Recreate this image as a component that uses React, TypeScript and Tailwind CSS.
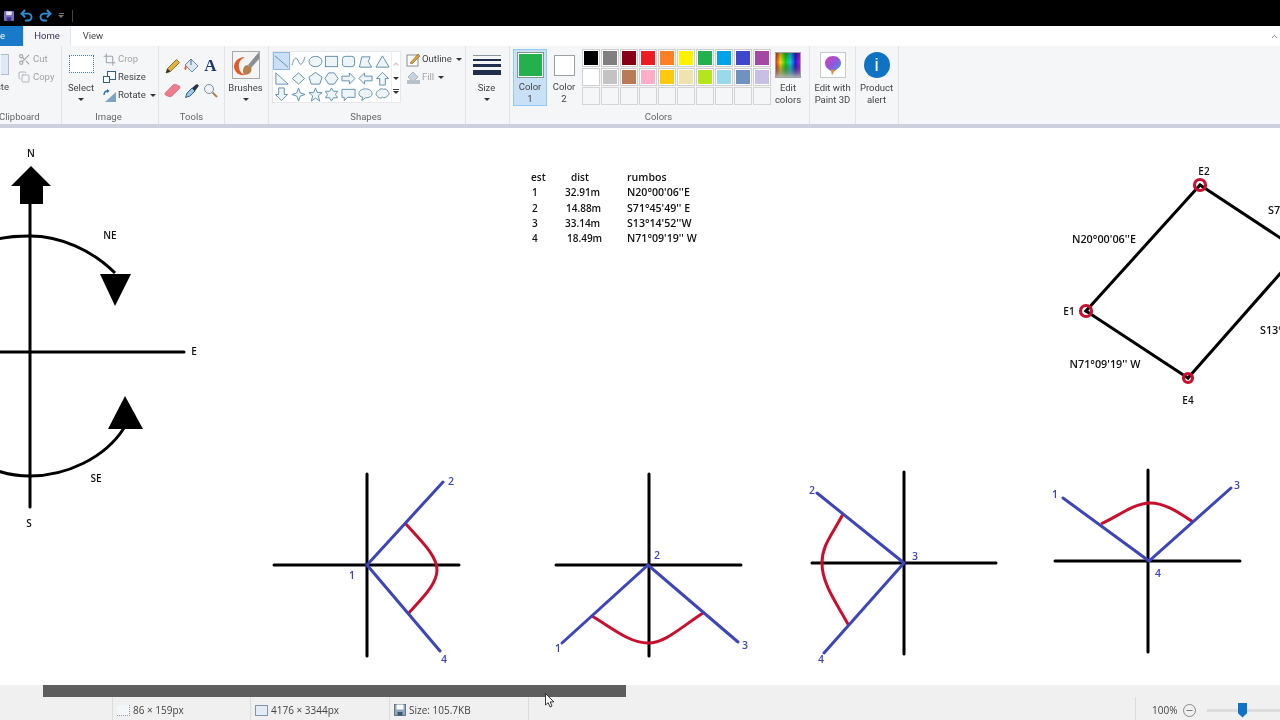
import type { ReactNode } from 'react';
import { ChevronUp, Copy, Crop, Minus, Redo2, Scissors, Undo2 } from 'lucide-react';

const paletteTop = ['#000000', '#7f7f7f', '#880015', '#ed1c24', '#ff7f27', '#fff200', '#22b14c', '#00a2e8', '#3f48cc', '#a349a4'];
const paletteMid = ['#ffffff', '#c3c3c3', '#b97a57', '#ffaec9', '#ffc90e', '#efe4b0', '#b5e61d', '#99d9ea', '#7092be', '#c8bfe7'];

const shapes: ReactNode[] = [
    <path d="M1 2 L15 14" />,
    <path d="M1 12 C4 2 6 3 8 8 C10 13 12 12 15 3" fill="none" />,
    <ellipse cx="8" cy="8" rx="7" ry="5.5" />,
    <rect x="1.5" y="2.5" width="13" height="11" />,
    <rect x="1.5" y="2.5" width="13" height="11" rx="3" />,
    <path d="M1.5 14 L4 3 H13 L11 8 L14.5 14 Z" />,
    <path d="M8 2 L15 14 H1 Z" />,
    <path d="M2 2 L15 14 H2 Z" />,
    <path d="M8 2 L14.5 8 L8 14 L1.5 8 Z" />,
    <path d="M8 1.5 L15 6.5 L12.5 14 H3.5 L1 6.5 Z" />,
    <path d="M5 2 H11 L15 8 L11 14 H5 L1 8 Z" />,
    <path d="M1 5.5 H9 V2 L15 8 L9 14 V10.5 H1 Z" />,
    <path d="M15 5.5 H7 V2 L1 8 L7 14 V10.5 H15 Z" />,
    <path d="M5 15 V8 H1.5 L8 1.5 L14.5 8 H11 V15 Z" />,
    <path d="M5 1 V8 H1.5 L8 14.5 L14.5 8 H11 V1 Z" />,
    <path d="M8 1 L9.8 6.2 L15 8 L9.8 9.8 L8 15 L6.2 9.8 L1 8 L6.2 6.2 Z" />,
    <path d="M8 1 L10 6 H15 L11 9.4 L12.5 15 L8 11.8 L3.5 15 L5 9.4 L1 6 H6 Z" />,
    <path d="M8 1 L10 4.5 H14.5 L12.3 8 L14.5 11.5 H10 L8 15 L6 11.5 H1.5 L3.7 8 L1.5 4.5 H6 Z" />,
    <path d="M1 2.5 H15 V11 H7 L3.5 14.5 V11 H1 Z" />,
    <path d="M8 2 C12 2 15 4 15 7 C15 10 12 11.5 8 11.5 L4 14.5 L5 11 C2.5 10.5 1 9 1 7 C1 4 4 2 8 2 Z" />,
    <path d="M4 3.5 C5.5 1.5 8 1.5 9 2.5 C11 1.5 13.5 2.5 13.5 4.5 C15.5 5.5 15.5 9 13 9.5 C12.5 11.5 9.5 12 8 11 C6.5 12.5 3.5 12 3 10 C0.5 9.5 0.5 5 4 3.5 Z" />,
];

function Group({ label, className, labelClass = 'text-center', children }: { label: string; className: string; labelClass?: string; children: ReactNode }) {
    return (
        <div className={`flex flex-col shrink-0 border-r border-[#e2e3e6] ${className}`}>
            <div className="flex h-[63px]">{children}</div>
            <div className={`h-[15px] leading-[16px] text-[#666] whitespace-nowrap ${labelClass}`}>{label}</div>
        </div>
    );
}

function BigButton({ icon, lines, caret, className }: { icon: ReactNode; lines: string[]; caret?: boolean; className: string }) {
    return (
        <div className={`flex flex-col items-center shrink-0 ${className}`}>
            <div className="h-[36px] flex items-center justify-center">{icon}</div>
            {lines.map((l) => (
                <div key={l} className="leading-[12px] whitespace-nowrap text-[#444]">{l}</div>
            ))}
            {caret && <Caret className="mt-[4px]" />}
        </div>
    );
}

function Caret({ className = '' }: { className?: string }) {
    return <div className={`w-0 h-0 border-x-[3px] border-x-transparent border-t-[3px] border-t-[#333] ${className}`} />;
}

function SmallRow({ icon, text, muted, caret }: { icon: ReactNode; text: string; muted?: boolean; caret?: boolean }) {
    return (
        <div className="flex items-center h-[18px] gap-[1px]">
            <div className="w-[16px] h-[16px] flex items-center justify-center">{icon}</div>
            <span className={muted ? 'text-[#a3a3a3]' : 'text-[#444]'}>{text}</span>
            {caret && <Caret className="ml-[3px]" />}
        </div>
    );
}

function Ribbon() {
    return (
        <div className="flex h-[78px] bg-[#f5f6f7] text-[9.5px] shrink-0 font-['Roboto',sans-serif]">
            <Group label="Clipboard" labelClass="text-left -ml-[1px]" className="w-[62px]">
                <div className="w-[9px] mt-[8px] overflow-hidden flex flex-col items-end shrink-0">
                    <div className="w-[8px] h-[21px] bg-[#dfe8f5] border border-l-0 border-[#aebdd0]" />
                    <div className="h-[6px]" />
                    <span className="leading-[12px] text-[#444]">Paste</span>
                </div>
                <div className="ml-[7px] mt-[4px]">
                    <SmallRow muted text="Cut" icon={<Scissors size={13} className="text-[#a0a4aa]" />} />
                    <SmallRow muted text="Copy" icon={<Copy size={12} className="text-[#b0b4ba]" />} />
                </div>
            </Group>

            <Group label="Image" className="w-[97px] pr-[3px]">
                <BigButton
                    className="w-[38px]"
                    lines={['Select']}
                    caret
                    icon={<div className="w-[25px] h-[18px] bg-white border border-dotted border-[#4b7ea8]" />}
                />
                <div className="mt-[4px] ml-[1px]">
                    <SmallRow muted text="Crop" icon={<Crop size={13} className="text-[#9aa3ad]" />} />
                    <SmallRow
                        text="Resize"
                        icon={
                            <svg width="14" height="14" viewBox="0 0 14 14" fill="#fff" stroke="#33617f">
                                <rect x="5.5" y="1.5" width="8" height="8" />
                                <rect x="1.5" y="6.5" width="6" height="6" />
                            </svg>
                        }
                    />
                    <SmallRow
                        text="Rotate"
                        caret
                        icon={
                            <svg width="15" height="15" viewBox="0 0 15 15">
                                <path d="M14 14 H3 L14 4 Z" fill="#7fa3c4" />
                                <path d="M2 7 C2 4 3 3 6 3" fill="none" stroke="#1f6fb5" strokeWidth="1.3" />
                                <path d="M5 1 L7.5 3 L5 5 Z" fill="#1f6fb5" />
                            </svg>
                        }
                    />
                </div>
            </Group>

            <Group label="Tools" className="w-[66px]">
                <div className="grid grid-cols-[19px_19px_19px] grid-rows-[25px_25px] ml-[4px] mt-[7px] items-center justify-items-center">
                    <svg width="16" height="16" viewBox="0 0 16 16">
                        <path d="M1 15 L2.5 10.5 L11.5 1.5 L14.5 4.5 L5.5 13.5 Z" fill="#e3b23c" stroke="#6b5a2a" strokeWidth="0.8" />
                        <path d="M1 15 L2.5 10.5 L5.5 13.5 Z" fill="#333" />
                    </svg>
                    <svg width="17" height="17" viewBox="0 0 17 17">
                        <path d="M8 2 L15 9 L9 15 L2 8 Z" fill="#dbe7f2" stroke="#6d8aa5" />
                        <path d="M3 8 C1 10 1 12 2 13 C4 13 4 10 3 8 Z" fill="#e3603a" />
                        <path d="M8 8 L8 2" stroke="#4a6b8a" />
                    </svg>
                    <span className="font-['Liberation_Serif',serif] font-bold text-[17px] leading-none text-[#1c3a70]">A</span>
                    <svg width="17" height="15" viewBox="0 0 17 15">
                        <path d="M1 10 L9 2 Q10 1 12 1.5 L15.5 3 Q16.5 4 15.5 5.5 L8 13 Q7 14 5 13.5 L2 12.5 Q0.5 11.5 1 10 Z" fill="#ec7d8e" stroke="#c9606f" strokeWidth="0.6" />
                    </svg>
                    <svg width="16" height="16" viewBox="0 0 16 16">
                        <path d="M1.5 14.5 L3 10 L8 5 L11 8 L6 13 Z" fill="#9cc4e4" stroke="#34658c" />
                        <path d="M8 5 L12 1.5 Q13.5 1 14.5 2 Q15 3.2 14 4 L11 8 Z" fill="#26364a" />
                    </svg>
                    <svg width="15" height="15" viewBox="0 0 15 15" fill="none">
                        <circle cx="6" cy="6" r="4.5" fill="#eef4f9" stroke="#7a93a8" />
                        <path d="M9.5 9.5 L14 14" stroke="#a9814f" strokeWidth="1.8" />
                    </svg>
                </div>
            </Group>

            <Group label="" className="w-[44px]">
                <BigButton
                    className="w-[41px]"
                    lines={['Brushes']}
                    caret
                    icon={
                        <svg width="28" height="28" viewBox="0 0 28 28" className="mt-[1px]">
                            <rect x="0.5" y="0.5" width="27" height="27" fill="#f4f4f4" stroke="#a8a8a8" />
                            <path d="M27 1 L16 14 L19 17 L27 8 Z" fill="#8a8f94" />
                            <path d="M15 14 C11 15 10 20 12 24 C17 24 21 21 19 16 Z" fill="#b57f4e" />
                            <path d="M2 15 C3 8 9 6 13 6 C9 8 6 11 7 17 C8 21 10 23 13 24 C7 25 2 21 2 15 Z" fill="#e0592a" />
                        </svg>
                    }
                />
            </Group>

            <Group label="Shapes" className="w-[197px] pr-[2px]">
                <div className="flex ml-[3px] mt-[5px] h-[52px] w-[129px] bg-white border border-[#e6e7ea] shrink-0">
                    <div className="grid grid-cols-7 w-[119px] h-[51px]">
                        {shapes.map((s, i) => (
                            <div key={i} className={`flex items-center justify-center ${i === 0 ? 'bg-[#c9e0f7] border border-[#90b8dc]' : ''}`}>
                                <svg width="15" height="15" viewBox="0 0 16 16" fill="#edf5f9" stroke="#5f8ea8" strokeWidth="1">{s}</svg>
                            </div>
                        ))}
                    </div>
                    <div className="flex-1 flex flex-col items-center justify-around border-l border-[#eeeeee] py-[3px]">
                        <ChevronUp size={8} strokeWidth={4} className="text-[#cfcfcf]" />
                        <Caret />
                        <div className="flex flex-col items-center gap-[1px]">
                            <div className="w-[6px] h-[1px] bg-[#444]" />
                            <Caret />
                        </div>
                    </div>
                </div>
                <div className="ml-[4px] mt-[4px]">
                    <SmallRow
                        text="Outline"
                        caret
                        icon={
                            <svg width="15" height="15" viewBox="0 0 15 15">
                                <rect x="1" y="3" width="11" height="11" fill="#fff" stroke="#8c8c8c" />
                                <path d="M4 11 L12 2 L14 4 L6 12 Z" fill="#d7a23b" stroke="#7b6230" strokeWidth="0.6" />
                            </svg>
                        }
                    />
                    <SmallRow
                        muted
                        text="Fill"
                        caret
                        icon={
                            <svg width="15" height="15" viewBox="0 0 15 15">
                                <rect x="1" y="10" width="13" height="4" fill="#b9c2cc" />
                                <path d="M7 2 L12 7 L7 12 L2 7 Z" fill="#c6d2de" stroke="#a7b4c2" />
                            </svg>
                        }
                    />
                </div>
            </Group>

            <Group label="" className="w-[44px]">
                <BigButton
                    className="w-[41px]"
                    lines={['Size']}
                    caret
                    icon={
                        <div className="flex flex-col w-[28px] mt-[1px]">
                            <div className="h-[1px] bg-[#8d97a3] mb-[3px]" />
                            <div className="h-[2px] bg-[#1f2f4d] mb-[3px]" />
                            <div className="h-[3px] bg-[#1f2f4d] mb-[3px]" />
                            <div className="h-[5px] bg-[#1f2f4d]" />
                        </div>
                    }
                />
            </Group>

            <Group label="Colors" className="w-[300px] pr-[2px]">
                <div className="flex flex-col items-center w-[34px] h-[57px] ml-[3px] mt-[3px] bg-[#c9e0f7] border border-[#90c8f6] shrink-0">
                    <div className="w-[27px] h-[27px] mt-[2px] border border-[#7f9a88] bg-white p-[1px]">
                        <div className="w-full h-full bg-[#22b14c]" />
                    </div>
                    <div className="leading-[12px] mt-[3px] text-[#444]">Color</div>
                    <div className="leading-[12px] text-[#444]">1</div>
                </div>
                <div className="flex flex-col items-center w-[34px] mt-[3px] shrink-0">
                    <div className="w-[21px] h-[21px] mt-[6px] bg-white border border-[#a0a0a0]" />
                    <div className="leading-[12px] mt-[5px] text-[#444]">Color</div>
                    <div className="leading-[12px] text-[#444]">2</div>
                </div>
                <div className="grid grid-cols-[repeat(10,18px)] grid-rows-[repeat(3,18px)] gap-[1px] ml-[1px] mt-[3px]">
                    {paletteTop.concat(paletteMid).map((c) => (
                        <div key={c} className="border border-[#cfcfcf] p-[1px] bg-white">
                            <div className="w-full h-full" style={{ backgroundColor: c }} />
                        </div>
                    ))}
                    {paletteTop.map((c) => (
                        <div key={c} className="border border-[#d4d4d4] bg-[#f5f6f7]" />
                    ))}
                </div>
                <BigButton
                    className="w-[34px]"
                    lines={['Edit', 'colors']}
                    icon={
                        <svg width="26" height="26" viewBox="0 0 26 26" className="mt-[1px]">
                            <defs>
                                <linearGradient id="rainbow" x1="0" x2="1" y1="0" y2="0">
                                    <stop offset="0" stopColor="#f01818" />
                                    <stop offset="0.2" stopColor="#f0e018" />
                                    <stop offset="0.4" stopColor="#18d018" />
                                    <stop offset="0.6" stopColor="#18c8e8" />
                                    <stop offset="0.8" stopColor="#2020e0" />
                                    <stop offset="1" stopColor="#e018c8" />
                                </linearGradient>
                                <linearGradient id="shade" x1="0" x2="0" y1="0" y2="1">
                                    <stop offset="0" stopColor="#000" stopOpacity="0.3" />
                                    <stop offset="0.4" stopColor="#000" stopOpacity="0" />
                                    <stop offset="1" stopColor="#bbb" stopOpacity="0.95" />
                                </linearGradient>
                            </defs>
                            <rect x="0.5" y="0.5" width="25" height="25" fill="url(#rainbow)" />
                            <rect x="0.5" y="0.5" width="25" height="25" fill="url(#shade)" stroke="#a0a0a0" />
                        </svg>
                    }
                />
            </Group>

            <Group label="" className="w-[46px]">
                <BigButton
                    className="w-[45px]"
                    lines={['Edit with', 'Paint 3D']}
                    icon={
                        <svg width="26" height="26" viewBox="0 0 26 26" className="mt-[1px]">
                            <defs>
                                <linearGradient id="balloon" x1="0" x2="1" y1="0" y2="1">
                                    <stop offset="0" stopColor="#e03fb0" />
                                    <stop offset="0.5" stopColor="#8a5be0" />
                                    <stop offset="1" stopColor="#27b3e8" />
                                </linearGradient>
                            </defs>
                            <rect x="0.5" y="0.5" width="25" height="25" fill="#fff" stroke="#c8c8c8" />
                            <path d="M13 4 C18 4 21 7.5 21 11 C21 15 17 17.5 14 19 L12 23 L11.5 19 C8 17.5 5 15 5 11 C5 7.5 8 4 13 4 Z" fill="url(#balloon)" />
                            <path d="M11 17 L15 18 L12 23 Z" fill="#f08a24" />
                        </svg>
                    }
                />
            </Group>

            <Group label="" className="w-[43px]">
                <BigButton
                    className="w-[41px]"
                    lines={['Product', 'alert']}
                    icon={
                        <div className="w-[26px] h-[26px] mt-[1px] rounded-full bg-[#0f72c2] flex items-center justify-center text-white text-[19px] leading-none font-['Liberation_Sans',sans-serif]">
                            i
                        </div>
                    }
                />
            </Group>
        </div>
    );
}

function Label({ x, y, children, blue, size = 10, anchor = 'middle' }: { x: number; y: number; children: ReactNode; blue?: boolean; size?: number; anchor?: 'middle' | 'start' }) {
    return (
        <text x={x} y={y} textAnchor={anchor} dominantBaseline="central" fill={blue ? '#3d45b8' : '#111'} stroke="none" fontSize={blue ? 10.5 : size} fontWeight={600}>
            {children}
        </text>
    );
}

function Cross({ x, y, top, bottom, left, right }: { x: number; y: number; top: number; bottom: number; left: number; right: number }) {
    return <path d={`M${x} ${top} V${bottom} M${left} ${y} H${right}`} stroke="#000" strokeWidth="3" strokeLinecap="round" fill="none" />;
}

const rows = [
    ['1', 565, '32.91m', 'N20°00\'06\'\'E'],
    ['2', 566, '14.88m', 'S71°45\'49\'\' E'],
    ['3', 565, '33.14m', 'S13°14\'52\'\'W'],
    ['4', 567, '18.49m', 'N71°09\'19\'\' W'],
] as const;
const rowY = [192, 208, 223, 238];

function Canvas() {
    return (
        <div className="flex-1 bg-white min-h-0">
            <svg width="1280" height="557" viewBox="0 128 1280 557" className="block font-['Open_Sans',sans-serif]">
                {/* compass */}
                <path d="M30 200 V507 M0 352 H184" stroke="#000" strokeWidth="3" strokeLinecap="round" fill="none" />
                <path d="M31 166 L51 186 H43 V204 H20 V186 H11 Z" fill="#000" />
                <path d="M-2 239 C10 236 20 236 30 236 C60 236 92 250 115 273" stroke="#000" strokeWidth="3" fill="none" />
                <path d="M100 274 H131 L115 306 Z" fill="#000" />
                <path d="M-2 471 C10 475 20 476 30 476 C66 476 105 458 124 428" stroke="#000" strokeWidth="3" fill="none" />
                <path d="M125 396 L108 429 H143 Z" fill="#000" />
                <Label x={31} y={153}>N</Label>
                <Label x={110} y={235}>NE</Label>
                <Label x={194} y={351}>E</Label>
                <Label x={96} y={478}>SE</Label>
                <Label x={29} y={523}>S</Label>

                {/* table */}
                <Label x={531} y={177} anchor="start">est</Label>
                <Label x={571} y={177} anchor="start">dist</Label>
                <Label x={627} y={177} anchor="start" size={10.6}>rumbos</Label>
                {rows.map((r, i) => (
                    <g key={r[0]}>
                        <Label x={532} y={rowY[i]} anchor="start">{r[0]}</Label>
                        <Label x={r[1]} y={rowY[i]} anchor="start">{r[2]}</Label>
                        <Label x={627} y={rowY[i]} anchor="start" size={10.6}>{r[3]}</Label>
                    </g>
                ))}

                {/* polygon */}
                <path d="M1285 241 L1200 185 L1086 311 L1188 378 L1285 268" stroke="#000" strokeWidth="3" fill="none" />
                {[[1200, 185, 5.5], [1086, 311, 5.5], [1188, 378, 4.5]].map(([x, y, r]) => (
                    <g key={x}>
                        <circle cx={x} cy={y} r={r} fill="none" stroke="#c8102e" strokeWidth="3.2" />
                        <circle cx={x} cy={y} r="1.5" fill="#000" />
                    </g>
                ))}
                <Label x={1204} y={171}>E2</Label>
                <Label x={1104} y={238} size={10.8}>N20°00'06''E</Label>
                <Label x={1069} y={311}>E1</Label>
                <Label x={1105} y={363} size={10.8}>N71°09'19'' W</Label>
                <Label x={1188} y={400}>E4</Label>
                <Label x={1268} y={209} anchor="start" size={10.8}>S71°45'49'' E</Label>
                <Label x={1260} y={329} anchor="start" size={10.8}>S13°14'52''W</Label>

                {/* quadrants */}
                <Cross x={367} y={565} top={474} bottom={656} left={274} right={459} />
                <path d="M405 523 C420 540 437 555 437 570 C437 585 420 600 408 614" stroke="#c8102e" strokeWidth="3" fill="none" />
                <path d="M443 482 L367 565 L440 651" stroke="#3d45b8" strokeWidth="3" fill="none" strokeLinecap="round" />
                <Label blue x={451} y={481}>2</Label>
                <Label blue x={352} y={575}>1</Label>
                <Label blue x={444} y={659}>4</Label>

                <Cross x={649} y={565} top={474} bottom={656} left={556} right={741} />
                <path d="M592 616 C615 630 630 643 648 643 C665 643 680 628 703 613" stroke="#c8102e" strokeWidth="3" fill="none" />
                <path d="M562 643 L648 565 L738 642" stroke="#3d45b8" strokeWidth="3" fill="none" strokeLinecap="round" />
                <Label blue x={657} y={555}>2</Label>
                <Label blue x={558} y={648}>1</Label>
                <Label blue x={745} y={645}>3</Label>

                <Cross x={904} y={563} top={472} bottom={654} left={812} right={996} />
                <path d="M843 514 C832 535 822 545 822 563 C822 585 838 605 849 626" stroke="#c8102e" strokeWidth="3" fill="none" />
                <path d="M817 493 L904 563 L824 653" stroke="#3d45b8" strokeWidth="3" fill="none" strokeLinecap="round" />
                <Label blue x={812} y={490}>2</Label>
                <Label blue x={915} y={556}>3</Label>
                <Label blue x={821} y={659}>4</Label>

                <Cross x={1148} y={561} top={470} bottom={652} left={1055} right={1240} />
                <path d="M1101 524 C1120 515 1135 503 1150 503 C1165 503 1178 512 1193 522" stroke="#c8102e" strokeWidth="3" fill="none" />
                <path d="M1063 498 L1149 561 L1231 488" stroke="#3d45b8" strokeWidth="3" fill="none" strokeLinecap="round" />
                <Label blue x={1055} y={494}>1</Label>
                <Label blue x={1237} y={485}>3</Label>
                <Label blue x={1158} y={573}>4</Label>
            </svg>
        </div>
    );
}

function StatusCell({ className, icon, text }: { className: string; icon?: ReactNode; text?: string }) {
    return (
        <div className={`flex items-center gap-[3px] shrink-0 border-r border-[#dcdcdc] ${className}`}>
            {icon}
            {text && <span className="pt-[3px]">{text}</span>}
        </div>
    );
}

export default function App() {
    return (
        <div className="relative w-[1280px] h-[720px] overflow-hidden flex flex-col bg-white font-['Open_Sans',sans-serif] blur-[0.3px]">
            {/* title bar */}
            <div className="h-[26px] bg-black flex items-center shrink-0 pl-[4px]">
                <svg width="10" height="10" viewBox="0 0 11 11" className="mt-[6px]">
                    <rect width="11" height="11" rx="1" fill="#7a6cc0" />
                    <rect x="2.5" y="0.5" width="6" height="4" fill="#e8e6f5" />
                    <rect x="3" y="7" width="5" height="4" fill="#3b3480" />
                </svg>
                <Undo2 size={15} strokeWidth={3} className="ml-[5px] mt-[5px] text-[#2f8fd8]" />
                <Redo2 size={15} strokeWidth={3} className="ml-[4px] mt-[5px] text-[#2f8fd8]" />
                <div className="ml-[5px] mt-[5px] flex flex-col items-center gap-[1px]">
                    <div className="w-[5px] h-[1px] bg-[#777]" />
                    <Caret className="border-t-[#777]" />
                </div>
                <div className="ml-[8px] mt-[5px] w-[1px] h-[12px] bg-[#444]" />
            </div>

            {/* tabs */}
            <div className="h-[20px] bg-white flex items-stretch text-[9.5px] shrink-0 font-['Roboto',sans-serif]">
                <div className="w-[23px] bg-[#1979ca] text-white overflow-hidden flex items-center justify-end pr-[18px] pt-[1px]">
                    <span>File</span>
                </div>
                <div className="w-[48px] pt-[1px] bg-[#f5f6f7] border-x border-[#e2e3e6] flex items-center justify-center text-[#3d2f58]">Home</div>
                <div className="w-[44px] pt-[1px] flex items-center justify-center text-[#444]">View</div>
                <div className="flex-1 flex items-center justify-end pr-[1px]">
                    <ChevronUp size={9} className="text-[#555]" />
                </div>
            </div>

            <Ribbon />
            <div className="h-[4px] bg-[#cdd1de] shrink-0" />
            <Canvas />

            {/* horizontal scrollbar */}
            <div className="h-[12px] bg-[#f0f0f0] shrink-0 pl-[43px]">
                <div className="w-[583px] h-full bg-[#5d5d5d]" />
            </div>

            {/* status bar */}
            <div className="h-[23px] bg-[#f0f0f0] flex items-stretch text-[10px] text-[#444] shrink-0">
                <StatusCell className="w-[113px]" />
                <StatusCell
                    className="w-[138px] pl-[4px]"
                    text="86 × 159px"
                    icon={<div className="w-[13px] h-[11px] mt-[3px] border-b border-r border-dotted border-[#8a99a8] bg-[#f4f7fa]" />}
                />
                <StatusCell
                    className="w-[139px] pl-[4px]"
                    text="4176 × 3344px"
                    icon={<div className="w-[13px] h-[11px] mt-[3px] bg-[#e3ecf5] border border-[#7f95ab]" />}
                />
                <StatusCell
                    className="w-[139px] pl-[4px]"
                    text="Size: 105.7KB"
                    icon={
                        <svg width="12" height="12" viewBox="0 0 12 12" className="mt-[3px]">
                            <rect x="0.5" y="0.5" width="11" height="11" fill="#8fa6bd" stroke="#5f7890" />
                            <rect x="2.5" y="0.5" width="7" height="5" fill="#fff" />
                            <rect x="3.5" y="8" width="5" height="3.5" fill="#3e5670" />
                        </svg>
                    }
                />
                <StatusCell className="w-[607px]" />
                <div className="flex-1 flex items-center pl-[16px] pt-[3px]">
                    <span className="w-[31px]">100%</span>
                    <div className="w-[13px] h-[13px] rounded-full border border-[#8a8a8a] flex items-center justify-center">
                        <Minus size={9} className="text-[#555]" />
                    </div>
                    <div className="relative ml-[11px] flex-1 h-[3px] bg-[#dcdcdc]">
                        <div className="absolute left-[31px] -top-[6px] w-[9px] h-[15px] bg-[#0f72c9] [clip-path:polygon(0_0,100%_0,100%_72%,50%_100%,0_72%)]" />
                    </div>
                </div>
            </div>

            {/* mouse cursor */}
            <svg width="10" height="15" viewBox="0 0 10 15" className="absolute left-[545px] top-[693px]">
                <path d="M0.5 0.5 V12 L3.2 9.6 L5 14 L7 13 L5.2 8.9 H8.8 Z" fill="#fff" stroke="#222" strokeWidth="0.9" />
            </svg>
        </div>
    );
}
